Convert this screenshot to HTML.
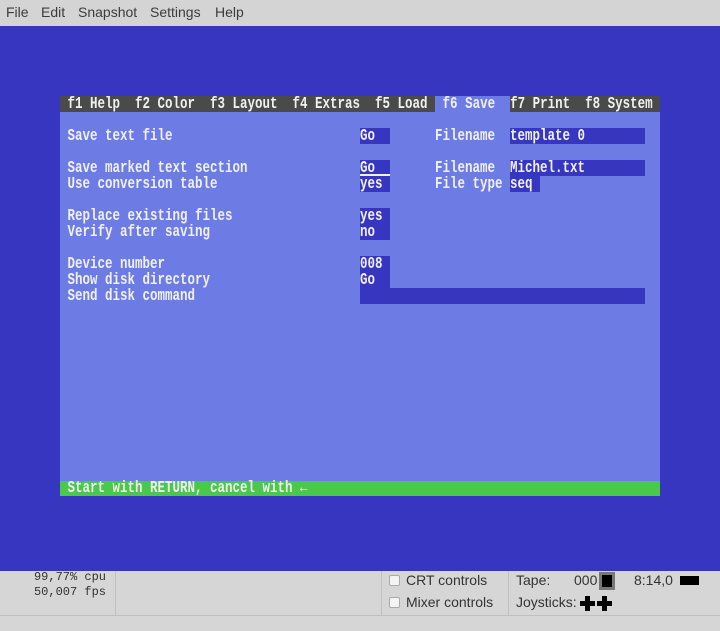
<!DOCTYPE html>
<html><head><style>
*{margin:0;padding:0;box-sizing:border-box}
body{width:720px;height:631px;background:#3636c1;position:relative;overflow:hidden;font-family:"Liberation Sans",sans-serif}
#menu{position:absolute;left:0;top:0;width:720px;height:26px;background:#d4d4d4;font-size:14px;color:#3c3c3c}
#menu span{position:absolute;top:4px}
#scr{position:absolute;left:60px;top:96px;width:600px;height:400px;background:#6d7ce4}
.t{position:absolute;font-family:"Liberation Mono",monospace;font-size:12.5px;font-weight:bold;color:#f0f0f0;white-space:pre;line-height:16px;height:16px;transform:scaleY(1.3);transform-origin:0 50%}
.b{position:absolute;background:#3636c1;height:16px}
#status{position:absolute;left:0;top:571px;width:720px;height:60px;background:#d6d6d6;font-size:14px;color:#333}
.vl{position:absolute;top:0;height:44px;width:1px;background:#c0c0c0}
.cb{position:absolute;width:11px;height:11px;border:1px solid #aaa;background:#f4f4f4;border-radius:2px}
.j{position:absolute;top:25px;width:15px;height:15px}
.j div{position:absolute;background:#000}
</style></head><body>
<div id="menu"><span style="left:6px">File</span><span style="left:41px">Edit</span><span style="left:78px">Snapshot</span><span style="left:150px">Settings</span><span style="left:215px">Help</span></div>
<div id="scr">
<div style="position:absolute;left:0;top:0;width:600px;height:16px;background:#4a4a4a"></div>
<div style="position:absolute;left:375px;top:0;width:75px;height:16px;background:#6d7ce4"></div>
<div class="t" style="left:7.5px;top:0">f1 Help  f2 Color  f3 Layout  f4 Extras  f5 Load  f6 Save  f7 Print  f8 System</div>
<div class="b" style="left:300px;top:32px;width:30px"></div>
<div class="b" style="left:450px;top:32px;width:135px"></div>
<div class="b" style="left:300px;top:64px;width:30px;height:32px"></div>
<div class="b" style="left:450px;top:64px;width:135px"></div>
<div class="b" style="left:450px;top:80px;width:30px"></div>
<div class="b" style="left:300px;top:112px;width:30px;height:32px"></div>
<div class="b" style="left:300px;top:160px;width:30px;height:32px"></div>
<div class="b" style="left:300px;top:192px;width:285px"></div>
<div style="position:absolute;left:300px;top:78px;width:30px;height:2px;background:#f0f0f0"></div>
<div class="t" style="left:7.5px;top:32px">Save text file</div>
<div class="t" style="left:7.5px;top:64px">Save marked text section</div>
<div class="t" style="left:7.5px;top:80px">Use conversion table</div>
<div class="t" style="left:7.5px;top:112px">Replace existing files</div>
<div class="t" style="left:7.5px;top:128px">Verify after saving</div>
<div class="t" style="left:7.5px;top:160px">Device number</div>
<div class="t" style="left:7.5px;top:176px">Show disk directory</div>
<div class="t" style="left:7.5px;top:192px">Send disk command</div>
<div class="t" style="left:300px;top:32px">Go</div>
<div class="t" style="left:300px;top:64px">Go</div>
<div class="t" style="left:300px;top:80px">yes</div>
<div class="t" style="left:300px;top:112px">yes</div>
<div class="t" style="left:300px;top:128px">no</div>
<div class="t" style="left:300px;top:160px">008</div>
<div class="t" style="left:300px;top:176px">Go</div>
<div class="t" style="left:375px;top:32px">Filename</div>
<div class="t" style="left:375px;top:64px">Filename</div>
<div class="t" style="left:375px;top:80px">File type</div>
<div class="t" style="left:450px;top:32px">template 0</div>
<div class="t" style="left:450px;top:64px">Michel.txt</div>
<div class="t" style="left:450px;top:80px">seq</div>
<div style="position:absolute;left:0;top:385px;width:600px;height:15px;background:#4ac84a"></div>
<div class="t" style="left:7.5px;top:384px">Start with RETURN, cancel with ←</div>
</div>
<div id="status">
<div style="position:absolute;left:0;top:-1px;font-family:'Liberation Mono',monospace;font-size:12px;line-height:15px;text-align:right;width:106px;white-space:nowrap">99,77% cpu<br>50,007 fps</div>
<div class="vl" style="left:115px"></div>
<div class="vl" style="left:381px"></div>
<div class="vl" style="left:508px"></div>
<div style="position:absolute;left:0;top:44px;width:720px;height:1px;background:#c0c0c0"></div>
<div class="cb" style="left:389px;top:4px"></div>
<div class="cb" style="left:389px;top:26px"></div>
<div style="position:absolute;left:406px;top:1px">CRT controls</div>
<div style="position:absolute;left:406px;top:23px">Mixer controls</div>
<div style="position:absolute;left:516px;top:1px">Tape:</div>
<div style="position:absolute;left:574px;top:1px">000</div>
<div style="position:absolute;left:599px;top:1px;width:16px;height:18px;background:#777"><div style="margin:3px;width:10px;height:12px;background:#000"></div></div>
<div style="position:absolute;left:634px;top:1px">8:14,0</div>
<div style="position:absolute;left:680px;top:5px;width:19px;height:9px;background:#000"></div>
<div style="position:absolute;left:516px;top:23px">Joysticks:</div>
<div class="j" style="left:580px"><div style="left:5px;top:0;width:5px;height:15px"></div><div style="left:0;top:5px;width:15px;height:5px"></div></div>
<div class="j" style="left:597px"><div style="left:5px;top:0;width:5px;height:15px"></div><div style="left:0;top:5px;width:15px;height:5px"></div></div>
</div>
</body></html>
